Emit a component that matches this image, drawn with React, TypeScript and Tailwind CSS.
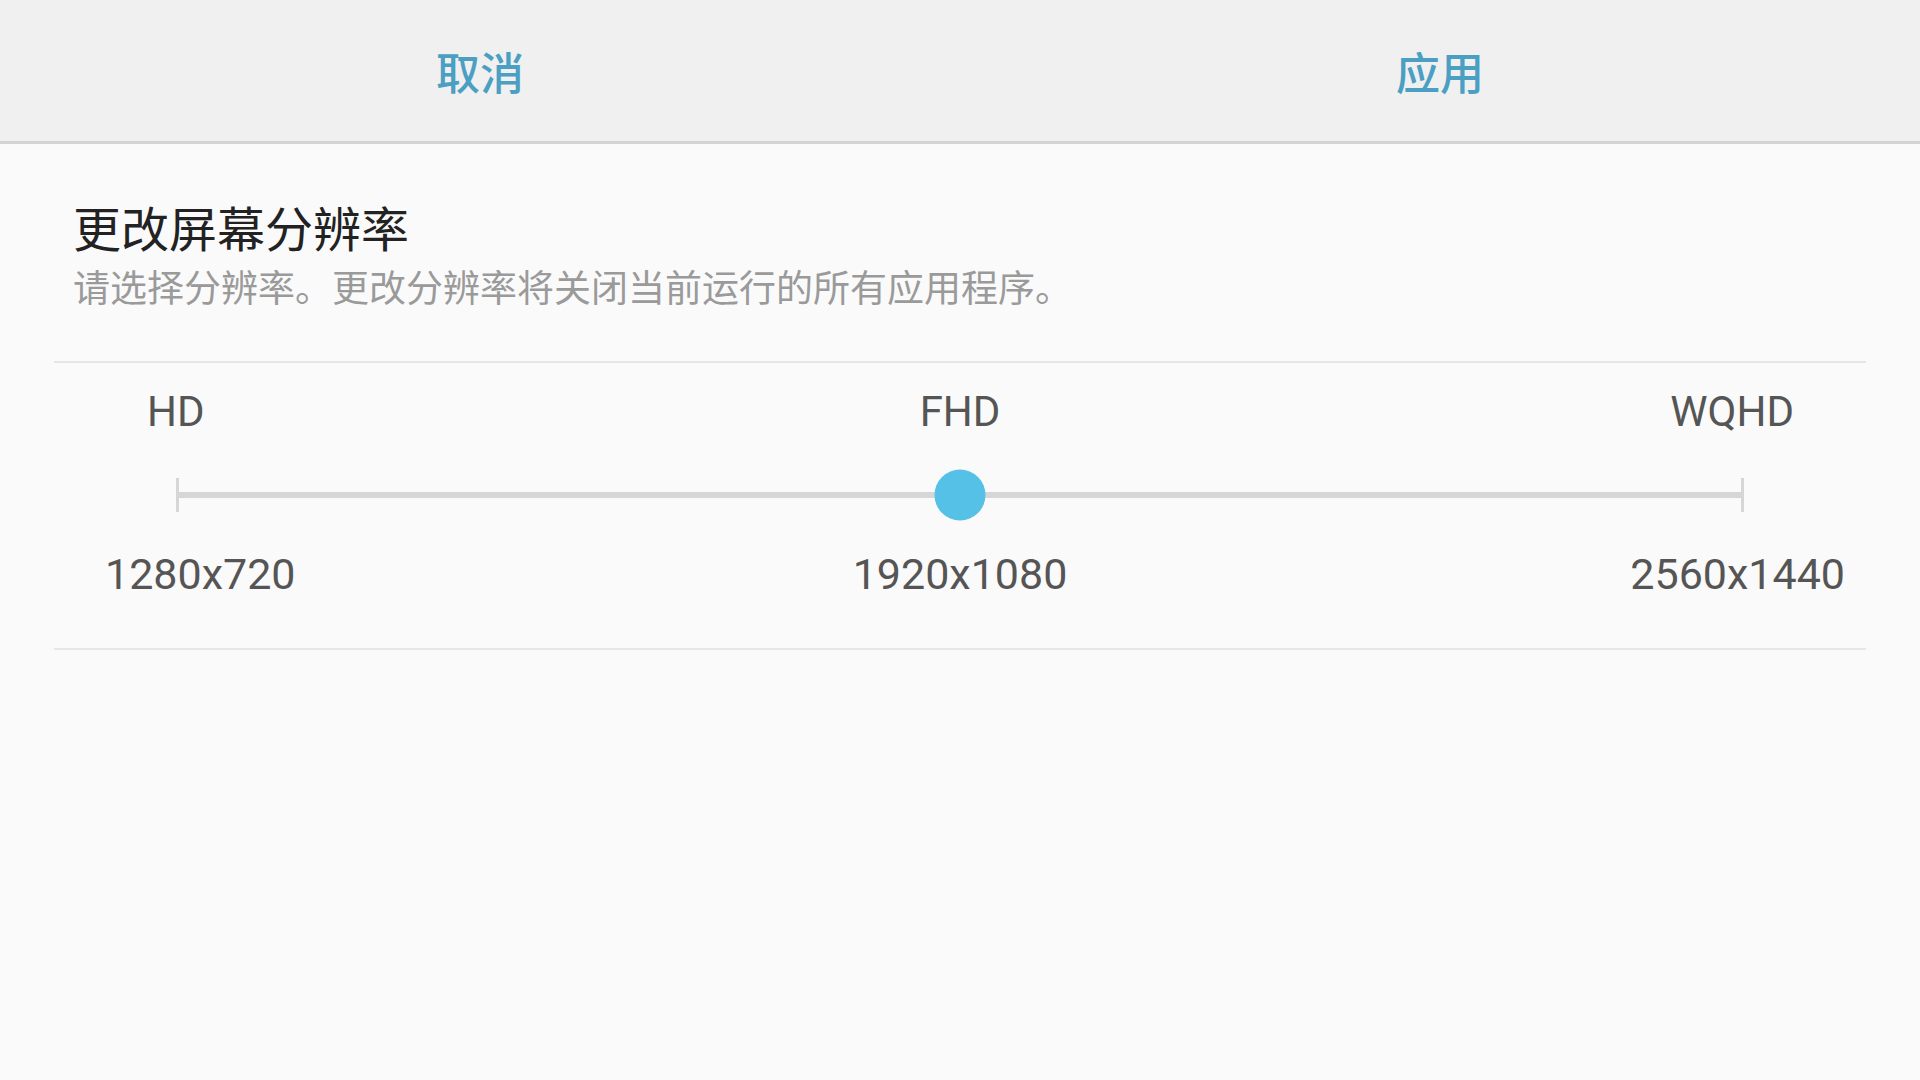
import React from "react";

const cjk = { fontFamily: '"Noto Sans CJK SC", "Noto Sans", sans-serif' };
const roboto = { fontFamily: 'Roboto, "Noto Sans CJK SC", sans-serif' };

export default function App() {
  return (
    <div className="w-[1920px] h-[1080px] bg-[#fafafa] overflow-hidden" style={cjk}>
      <div className="flex h-[144px] bg-[#f0f0f0] border-b-[3px] border-[#d4d4d4]">
        <button className="flex-1 flex items-center justify-center text-[44px] leading-[44px] font-medium text-[#4a9fc3]">
          取消
        </button>
        <button className="flex-1 flex items-center justify-center text-[44px] leading-[44px] font-medium text-[#4a9fc3]">
          应用
        </button>
      </div>

      <div className="px-[54px]">
        <div className="pl-[19px]">
          <div className="mt-[58px] text-[48px] leading-[48px] text-[#222222]">更改屏幕分辨率</div>
          <div className="mt-[18px] text-[37px] leading-[37px] text-[#9a9a9a]">
            请选择分辨率。更改分辨率将关闭当前运行的所有应用程序。
          </div>
        </div>

        <div className="mt-[56px] border-t-2 border-[#e6e6e6]" />

        <div className="pt-[28px] pb-[52px]" style={roboto}>
          <div className="grid grid-cols-[1fr_auto_1fr] text-[42px] leading-[42px] text-[#555555]">
            <div className="justify-self-start ml-[93px]">HD</div>
            <div className="justify-self-center">FHD</div>
            <div className="justify-self-end mr-[72px]">WQHD</div>
          </div>

          <div className="relative mt-[45px] mx-[122px] h-[34px] flex items-center">
            <div className="w-[3px] h-[34px] bg-[#d6d6d6]" />
            <div className="flex-1 h-[6px] bg-[#d6d6d6]" />
            <div className="w-[3px] h-[34px] bg-[#d6d6d6]" />
            <div className="absolute left-1/2 top-1/2 -translate-x-1/2 -translate-y-1/2 w-[51px] h-[51px] rounded-full bg-[#56c1e6]" />
          </div>

          <div className="mt-[41px] grid grid-cols-[1fr_auto_1fr] text-[43px] leading-[43px] text-[#555555]">
            <div className="justify-self-start ml-[51px]">1280x720</div>
            <div className="justify-self-center">1920x1080</div>
            <div className="justify-self-end mr-[21px]">2560x1440</div>
          </div>
        </div>

        <div className="border-t-2 border-[#e6e6e6]" />
      </div>
    </div>
  );
}
